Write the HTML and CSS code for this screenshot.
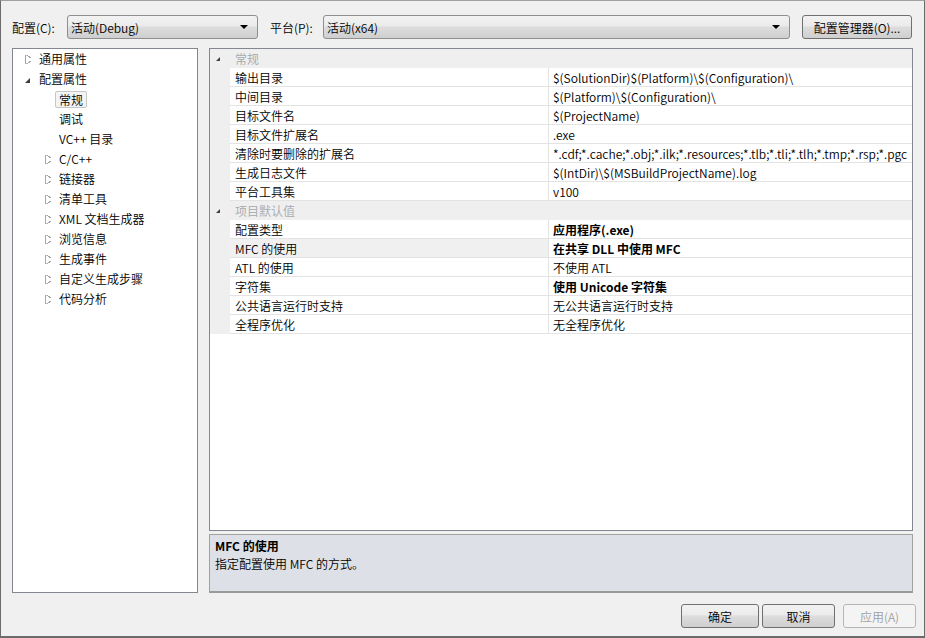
FILE: index.html
```html
<!DOCTYPE html>
<html lang="zh-CN">
  <head>
    <meta charset="UTF-8" />
    <meta name="viewport" content="width=device-width, initial-scale=1.0" />
    <title>属性页</title>
    <link rel="stylesheet" href="styles.css">
  </head>
  <body>
    <div class="window">
      <div class="toolbar">
        <span class="label">配置(C):</span>
        <div class="combo combo-config">
          <span>活动(Debug)</span>
          <span class="arrow"></span>
        </div>
        <span class="label label-platform">平台(P):</span>
        <div class="combo combo-platform">
          <span>活动(x64)</span>
          <span class="arrow"></span>
        </div>
        <button class="btn btn-manager">配置管理器(O)...</button>
      </div>

      <div class="main">
        <div class="tree">
          <div class="node"><span class="exp closed"></span>通用属性</div>
          <div class="node"><span class="exp open"></span>配置属性</div>
          <div class="node child"><span class="exp"></span><span class="selected">常规</span></div>
          <div class="node child"><span class="exp"></span>调试</div>
          <div class="node child"><span class="exp"></span>VC++ 目录</div>
          <div class="node child"><span class="exp closed"></span>C/C++</div>
          <div class="node child"><span class="exp closed"></span>链接器</div>
          <div class="node child"><span class="exp closed"></span>清单工具</div>
          <div class="node child"><span class="exp closed"></span>XML 文档生成器</div>
          <div class="node child"><span class="exp closed"></span>浏览信息</div>
          <div class="node child"><span class="exp closed"></span>生成事件</div>
          <div class="node child"><span class="exp closed"></span>自定义生成步骤</div>
          <div class="node child"><span class="exp closed"></span>代码分析</div>
        </div>

        <div class="right">
          <div class="props">
            <div class="category"><span class="cat-exp"></span><span>常规</span></div>
            <div class="row"><span class="gutter"></span><span class="name">输出目录</span><span class="value">$(SolutionDir)$(Platform)\$(Configuration)\</span></div>
            <div class="row"><span class="gutter"></span><span class="name">中间目录</span><span class="value">$(Platform)\$(Configuration)\</span></div>
            <div class="row"><span class="gutter"></span><span class="name">目标文件名</span><span class="value">$(ProjectName)</span></div>
            <div class="row"><span class="gutter"></span><span class="name">目标文件扩展名</span><span class="value">.exe</span></div>
            <div class="row"><span class="gutter"></span><span class="name">清除时要删除的扩展名</span><span class="value">*.cdf;*.cache;*.obj;*.ilk;*.resources;*.tlb;*.tli;*.tlh;*.tmp;*.rsp;*.pgc</span></div>
            <div class="row"><span class="gutter"></span><span class="name">生成日志文件</span><span class="value">$(IntDir)\$(MSBuildProjectName).log</span></div>
            <div class="row"><span class="gutter"></span><span class="name">平台工具集</span><span class="value">v100</span></div>
            <div class="category"><span class="cat-exp"></span><span>项目默认值</span></div>
            <div class="row"><span class="gutter"></span><span class="name">配置类型</span><span class="value bold">应用程序(.exe)</span></div>
            <div class="row active"><span class="gutter"></span><span class="name">MFC 的使用</span><span class="value bold">在共享 DLL 中使用 MFC</span></div>
            <div class="row"><span class="gutter"></span><span class="name">ATL 的使用</span><span class="value">不使用 ATL</span></div>
            <div class="row"><span class="gutter"></span><span class="name">字符集</span><span class="value bold">使用 Unicode 字符集</span></div>
            <div class="row"><span class="gutter"></span><span class="name">公共语言运行时支持</span><span class="value">无公共语言运行时支持</span></div>
            <div class="row"><span class="gutter"></span><span class="name">全程序优化</span><span class="value">无全程序优化</span></div>
          </div>
          <div class="desc">
            <div class="desc-title">MFC 的使用</div>
            <div class="desc-text">指定配置使用 MFC 的方式。</div>
          </div>
        </div>
      </div>

      <div class="buttons">
        <button class="btn">确定</button>
        <button class="btn">取消</button>
        <button class="btn disabled">应用(A)</button>
      </div>
    </div>
  </body>
</html>
```

FILE: styles.css
```css
html,
body {
  margin: 0;
  height: 100%;
}

body {
  font-family: "Noto Sans CJK SC", sans-serif;
  font-size: 12px;
  font-weight: 350;
  color: #000;
  background-color: #f0f0f0;
}

.window {
  box-sizing: border-box;
  width: 925px;
  height: 638px;
  border: 1px solid #6b6b6b;
  border-top-color: #a0a0a0;
  border-bottom-width: 2px;
  display: flex;
  flex-direction: column;
}

.toolbar {
  display: flex;
  align-items: center;
  height: 24px;
  margin-top: 14px;
  padding-left: 11px;
}

.label {
  width: 55px;
}

.label-platform {
  margin-left: 12px;
  width: 53px;
}

.combo {
  box-sizing: border-box;
  height: 24px;
  border: 1px solid #8e8f8f;
  border-radius: 3px;
  background: linear-gradient(#f3f3f3, #ebebeb 45%, #dddddd 50%, #cfcfcf);
  display: flex;
  align-items: center;
  justify-content: space-between;
  padding: 0 9px 0 3px;
}

.combo-config {
  width: 191px;
}

.combo-platform {
  width: 467px;
}

.arrow {
  width: 0;
  height: 0;
  border-left: 4px solid transparent;
  border-right: 4px solid transparent;
  border-top: 4px solid #000;
}

.btn {
  box-sizing: border-box;
  height: 24px;
  border: 1px solid #707070;
  border-radius: 3px;
  background: linear-gradient(#f2f2f2, #ebebeb 45%, #dddddd 50%, #cfcfcf);
  font-family: inherit;
  font-size: 12px;
  font-weight: inherit;
  color: #000;
  padding: 0;
}

.btn-manager {
  width: 110px;
  margin-left: 12px;
}

.main {
  display: flex;
  margin-top: 9px;
  padding-left: 11px;
  height: 545px;
}

.tree {
  box-sizing: border-box;
  width: 186px;
  border: 1px solid #828790;
  background-color: #fff;
}

.node {
  height: 20px;
  line-height: 20px;
  display: flex;
  align-items: center;
  padding-left: 12px;
  white-space: nowrap;
}

.node.child {
  padding-left: 32px;
}

.exp {
  width: 7px;
  height: 9px;
  margin-right: 7px;
  flex: none;
}

.exp.closed {
  background:
    linear-gradient(to top right, transparent 48%, #a6a6a6 49%, #a6a6a6 60%, transparent 61%) 0 0 / 7px 5px no-repeat,
    linear-gradient(to bottom right, transparent 48%, #a6a6a6 49%, #a6a6a6 60%, transparent 61%) 0 4px / 7px 5px no-repeat;
  border-left: 1px solid #a6a6a6;
  box-sizing: border-box;
  width: 6px;
  height: 9px;
  margin-right: 8px;
}

.exp.open {
  width: 0;
  height: 0;
  border-left: 5px solid transparent;
  border-bottom: 5px solid #3c3c3c;
  margin-right: 9px;
  margin-top: 2px;
}

.selected {
  border: 1px solid #c7c7c7;
  border-radius: 2px;
  background-color: #f4f4f4;
  line-height: 15px;
  padding: 0 3px;
  margin-left: -4px;
}

.right {
  display: flex;
  flex-direction: column;
  margin-left: 11px;
  width: 704px;
}

.props {
  box-sizing: border-box;
  height: 483px;
  border: 1px solid #828790;
  background-color: #fff;
  overflow: hidden;
}

.category,
.row {
  display: flex;
  height: 19px;
  line-height: 20px;
  white-space: nowrap;
}

.category {
  background-color: #efefef;
  color: #a3a8ae;
}

.cat-exp {
  width: 0;
  height: 0;
  border-left: 4px solid transparent;
  border-bottom: 4px solid #404040;
  margin: 8px 15px 0 6px;
}

.gutter {
  width: 20px;
  flex: none;
  background-color: #efefef;
}

.name {
  box-sizing: border-box;
  width: 319px;
  flex: none;
  padding-left: 5px;
  border-right: 1px solid #e3e3e3;
  border-bottom: 1px solid #e3e3e3;
}

.value {
  flex: 1;
  padding-left: 4px;
  overflow: hidden;
  border-bottom: 1px solid #e3e3e3;
}

.row.active .name {
  background-color: #f0f0f0;
}

.bold {
  font-weight: bold;
}

.desc {
  box-sizing: border-box;
  height: 59px;
  margin-top: 3px;
  border: 1px solid #a0a0a0;
  border-bottom: 2px solid #9a9a9a;
  background-color: #dde0e6;
  padding: 2px 5px;
  line-height: 18px;
}

.desc-title {
  font-weight: bold;
}

.buttons {
  display: flex;
  justify-content: flex-end;
  gap: 8px;
  margin-top: 11px;
  padding-right: 8px;
}

.buttons .btn {
  width: 73px;
}

.buttons .btn:first-child {
  width: 78px;
  margin-right: -5px;
}

.btn.disabled {
  border-color: #b5b5b5;
  background: #f4f4f4;
  color: #a0a0a0;
}
```
